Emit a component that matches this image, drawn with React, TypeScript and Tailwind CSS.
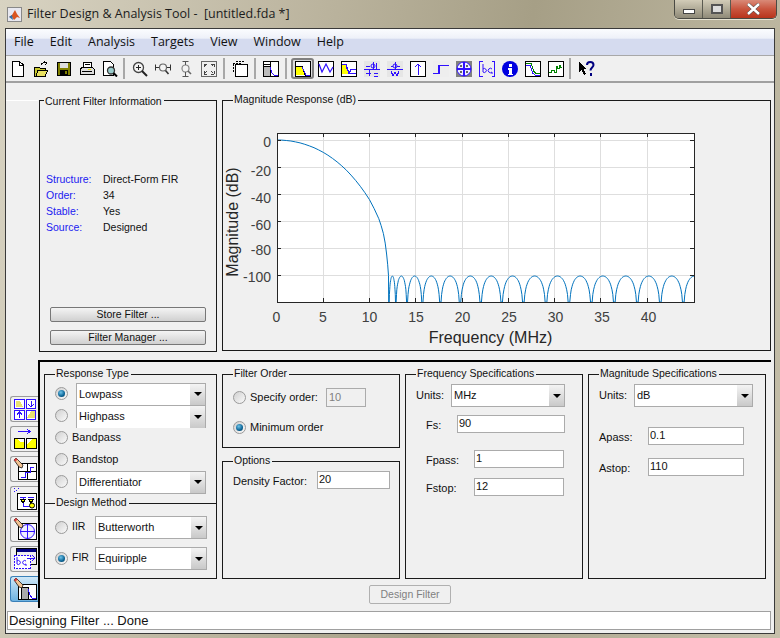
import type { ReactNode } from "react";

const BLUE = "#3010ff";

function Ico({ children, size = 16 }: { children: ReactNode; size?: number }) {
  return (
    <svg width={size} height={size} viewBox="0 0 16 16" fill="none" shapeRendering="crispEdges" className="block">
      {children}
    </svg>
  );
}

function Box({ children }: { children?: ReactNode }) {
  return (
    <Ico>
      <rect x="0.5" y="0.5" width="15" height="15" fill="#fff" stroke="#000" />
      {children}
    </Ico>
  );
}

const toolIcons: Record<string, ReactNode> = {
  newDoc: (
    <Ico>
      <path d="M2.500 .5h7L13.500 4v11.500h-11z" fill="#fff" stroke="#000" />
      <path d="M9.500 .5V4h4" stroke="#000" />
    </Ico>
  ),
  open: (
    <Ico>
      <path d="M1 6h5l1 1h5v8H1z" fill="#c8c830" stroke="#000" />
      <path d="M3 15l2-6h10l-3 6z" fill="#e8e060" stroke="#000" />
      <path d="M8 4C9 1.500 11 1 13 2M11 .5l3 1.500-2 2" stroke="#000" />
    </Ico>
  ),
  save: (
    <Ico>
      <rect x="1.500" y="1.500" width="13" height="13" fill="#808000" stroke="#000" />
      <rect x="4" y="2" width="8" height="5" fill="#ddd" />
      <rect x="4" y="9" width="8" height="5" fill="#000" />
      <rect x="9" y="10" width="2" height="3" fill="#808000" />
    </Ico>
  ),
  print: (
    <Ico>
      <path d="M4.500 1.500h8v5h-8z" fill="#fff" stroke="#000" />
      <path d="M1 8l3-2h9l2 2v5H1z" fill="#ddd" stroke="#000" />
      <path d="M3 13.500h10M3 10.500h10M6 3.500h5" stroke="#000" />
      <rect x="9" y="8" width="3" height="1" fill="#e8e000" />
    </Ico>
  ),
  preview: (
    <Ico>
      <path d="M1.500 .5h7l3 3v11h-10z" fill="#fff" stroke="#000" />
      <g shapeRendering="auto">
        <circle cx="9" cy="9.500" r="3.500" fill="#9cc" stroke="#333" strokeWidth="1.300" />
        <path d="M11.500 12l3.500 3.500" stroke="#000" strokeWidth="2" />
      </g>
    </Ico>
  ),
  zoomIn: (
    <Ico>
      <g shapeRendering="auto">
        <circle cx="6.500" cy="6.500" r="5" fill="#f4f4f4" stroke="#444" strokeWidth="1.300" />
        <path d="M10 10l5 5" stroke="#222" strokeWidth="2" />
        <path d="M4 6.500h5M6.500 4v5" stroke="#222" />
      </g>
    </Ico>
  ),
  zoomX: (
    <Ico>
      <g shapeRendering="auto">
        <circle cx="8" cy="6.500" r="3.500" fill="#f4f4f4" stroke="#666" strokeWidth="1.200" />
        <path d="M10.500 9.500l3 3.500" stroke="#333" strokeWidth="1.600" />
        <path d="M.5 3.500v6M15.500 3.500v6M1 6.500h3M12 6.500h3" stroke="#333" />
      </g>
    </Ico>
  ),
  zoomY: (
    <Ico>
      <g shapeRendering="auto">
        <circle cx="7.500" cy="7.500" r="3.500" fill="#f4f4f4" stroke="#888" strokeWidth="1.200" />
        <path d="M10 10l3 3" stroke="#666" strokeWidth="1.600" />
        <path d="M4.500 .5h6M4.500 15.500h6M7.500 1v3M7.500 11v4" stroke="#555" />
      </g>
    </Ico>
  ),
  full: (
    <Ico>
      <rect x=".5" y=".5" width="15" height="15" fill="#eee" stroke="#666" />
      <path d="M3 3h3M3 3v3M13 3h-3M13 3v3M3 13h3M3 13v-3M13 13h-3M13 13v-3" stroke="#444" />
      <path d="M3.500 3.500l2 2M12.500 3.500l-2 2M3.500 12.500l2-2M12.500 12.500l-2-2" stroke="#444" />
    </Ico>
  ),
  copy: (
    <Ico>
      <path d="M1 2.500h8M1 2.500v8M3.500 .5h8" stroke="#000" strokeDasharray="2 1" />
      <rect x="3.500" y="3.500" width="12" height="12" fill="#fff" stroke="#000" />
    </Ico>
  ),
  overlay: (
    <Box>
      <rect x="1" y="5" width="6" height="10" fill="#bbb" />
      <path d="M1 3.500h6M1 5.500h6M7.500 1v14" stroke="#000" />
      <path d="M7 6l2 6 2 2h4" stroke={BLUE} />
    </Box>
  ),
  mag: (
    <Box>
      <path d="M1 5h6l4 9H1z" fill="#ff0" />
      <path d="M1 5.500h6l3 8.500h5" stroke="#000" strokeWidth="1" />
      <path d="M7 6l4 8h4" stroke={BLUE} />
    </Box>
  ),
  phase: (
    <Box>
      <path d="M1 3l3 8 4-8 4 8 3-5" stroke={BLUE} shapeRendering="auto" strokeWidth="1.200" />
    </Box>
  ),
  both: (
    <Box>
      <path d="M1 3h4l3 10H1z" fill="#ff0" />
      <path d="M1 3.500h4l3 9h7M5 5l3 8 2-5h5" stroke={BLUE} />
    </Box>
  ),
  group: (
    <Ico>
      <rect width="16" height="16" fill="#e6e6e6" />
      <path d="M0 8.500h16M9 1v7M12 2v6M5 9v6M2 12h5M10 12h4M2 5h4M10 15h4" stroke={BLUE} />
      <circle cx="9" cy="5" r="2" stroke={BLUE} shapeRendering="auto" />
    </Ico>
  ),
  phaseDelay: (
    <Ico>
      <rect width="16" height="16" fill="#e6e6e6" />
      <path d="M0 8.500h16M8 1v7M4 5h2M10 5h3M4 10l2 5 2-4 2 4 2-5" stroke={BLUE} />
      <circle cx="8" cy="5" r="2" stroke={BLUE} shapeRendering="auto" />
    </Ico>
  ),
  impulse: (
    <Box>
      <path d="M8 14V3M5 6l3-3 3 3" stroke={BLUE} />
    </Box>
  ),
  step: (
    <Ico>
      <rect width="16" height="16" fill="#eee" />
      <path d="M0 12.500h6v-8h10" stroke={BLUE} strokeWidth="1.300" />
    </Ico>
  ),
  pz: (
    <Ico>
      <rect width="16" height="16" fill="#808080" />
      <circle cx="8" cy="8" r="7" fill="#eef" stroke={BLUE} shapeRendering="auto" />
      <path d="M1 8h14M8 1v14" stroke={BLUE} strokeWidth="1.300" />
      <path d="M4 4l2 2M6 4l-2 2M10 10l2 2M12 10l-2 2M4 10l2 2M6 10l-2 2M10 4l2 2M12 4l-2 2" stroke="#666" />
    </Ico>
  ),
  coef: (
    <Ico>
      <path d="M3.500 .5h-3v15h3M12.500 .5h3v15h-3" stroke={BLUE} />
      <g shapeRendering="auto">
        <path d="M4 3v8a2 2 0 1 0 0-3" stroke={BLUE} />
        <path d="M13 8a2.200 2.200 0 1 0 0 3v2" stroke={BLUE} />
      </g>
    </Ico>
  ),
  info: (
    <Ico>
      <g shapeRendering="auto">
        <circle cx="8" cy="8" r="8" fill="#0000e0" />
      </g>
      <rect x="7" y="3" width="2.500" height="2.500" fill="#fff" />
      <path d="M5.500 7h4v5.500h1.500V14H5.500v-1.500H7V8.500H5.500z" fill="#fff" />
    </Ico>
  ),
  round: (
    <Box>
      <path d="M1 2.500h5l3 8 2 2h4" stroke="#008000" />
      <path d="M1 4.500h4l3 8 2 1.500h5" stroke={BLUE} />
    </Box>
  ),
  noise: (
    <Box>
      <path d="M1 11.500h2v-2h3v2h2V5.500h1v2h2v-3h1v2h2" stroke="#008000" />
    </Box>
  ),
  help: (
    <Ico>
      <path d="M0 1l7.500 7H4.500l2.500 5-2 1-2.500-5L0 11.500z" fill="#000" />
      <path d="M8 4c0-4 6.500-4 6.500 0 0 2.500-3 2.500-3 5.500" stroke="#000080" strokeWidth="2" shapeRendering="auto" />
      <rect x="10.500" y="12" width="2.500" height="3" fill="#000080" />
    </Ico>
  ),
};

function Slot({ name, active }: { name: string; active?: boolean }) {
  return (
    <div className="w-[23px] h-[24px] flex items-center justify-center">
      <div
        className={
          active
            ? "w-[23px] h-[21px] flex items-center justify-center rounded-[3px] border-2 border-[#808080] bg-[#dcdcdc]"
            : "w-[16px] h-[16px]"
        }
      >
        {toolIcons[name]}
      </div>
    </div>
  );
}

function Sep({ className }: { className: string }) {
  return <div className={`w-[2px] h-[21px] bg-[#a8a8a8] ${className}`} />;
}

function Toolbar() {
  return (
    <div className="h-[27px] flex items-center bg-[#f0f0f0] border-b-2 border-[#a0a0a0]">
      {["newDoc", "open", "save", "print", "preview"].map((n) => (
        <Slot key={n} name={n} />
      ))}
      <Sep className="ml-[2px] mr-[3px]" />
      {["zoomIn", "zoomX", "zoomY", "full"].map((n) => (
        <Slot key={n} name={n} />
      ))}
      <Sep className="ml-[3px] mr-[3px]" />
      <Slot name="copy" />
      <Sep className="ml-[3px] mr-[3px]" />
      <Slot name="overlay" />
      <Sep className="ml-[3px] mr-[4px]" />
      <Slot name="mag" active />
      {["phase", "both", "group", "phaseDelay", "impulse", "step", "pz", "coef", "info", "round", "noise"].map((n) => (
        <Slot key={n} name={n} />
      ))}
      <Sep className="ml-[2px] mr-[4px]" />
      <Slot name="help" />
    </div>
  );
}

function Frame({
  title,
  className,
  legend = "-top-[9px] left-[10px]",
  children,
}: {
  title: string;
  className: string;
  legend?: string;
  children?: ReactNode;
}) {
  return (
    <div className={`relative border border-[#1a1a1a] ${className}`}>
      <span className={`absolute ${legend} bg-[#f0f0f0] px-[1px] pr-[2px] leading-[14px] text-[10.500px] whitespace-nowrap`}>
        {title}
      </span>
      {children}
    </div>
  );
}

function Radio({ on }: { on?: boolean }) {
  return (
    <div className="w-[13px] h-[13px] shrink-0 rounded-full border border-[#9a9a9a] bg-[linear-gradient(135deg,#d0d0d0,#fafafa)] flex items-center justify-center">
      {on && <div className="w-[7px] h-[7px] rounded-full bg-[radial-gradient(circle_at_40%_35%,#6fc3e8,#0b6496_60%,#04344f)]" />}
    </div>
  );
}

function Select({ value, className, noBottom }: { value: string; className: string; noBottom?: boolean }) {
  return (
    <div
      className={`h-[23px] bg-white border border-[#ababab] flex items-center justify-between pl-[2px] text-[11px] ${noBottom ? "border-b-0" : ""} ${className}`}
    >
      <span>{value}</span>
      <div className="w-[15px] h-full bg-[linear-gradient(#f4f4f4,#c9c9c9)] flex items-center justify-center">
        <div className="w-0 h-0 border-x-[4px] border-t-[4px] border-x-transparent border-t-black" />
      </div>
    </div>
  );
}

function Field({ value, className }: { value: string; className: string }) {
  return (
    <div className={`h-[18px] bg-white border border-[#ababab] pl-[1px] leading-[14px] text-[11px] ${className}`}>
      {value}
    </div>
  );
}

function PushButton({ label }: { label: string }) {
  return (
    <div className="h-[15px] border border-[#777] rounded-[2px] bg-[linear-gradient(#f4f4f4,#d0d0d0)] flex items-center justify-center leading-none">
      {label}
    </div>
  );
}

const info = [
  ["Structure:", "Direct-Form FIR"],
  ["Order:", "34"],
  ["Stable:", "Yes"],
  ["Source:", "Designed"],
];

function CurrentInfo() {
  return (
    <Frame title="Current Filter Information" legend="-top-[7px] left-[4px]" className="w-[178px] h-[252px] flex flex-col">
      <div className="pt-[71px] pl-[6px] flex flex-col">
        {info.map(([k, v]) => (
          <div key={k} className="h-[16px] flex items-center">
            <span className="w-[57px] text-[#2020f0]">{k}</span>
            <span>{v}</span>
          </div>
        ))}
      </div>
      <div className="mt-auto px-[10px] pb-[6px] flex flex-col gap-[8px]">
        <PushButton label="Store Filter ..." />
        <PushButton label="Filter Manager ..." />
      </div>
    </Frame>
  );
}

// plot mapping, all in window pixels
const px = (f: number) => 277 + 9.25 * f;
const py = (db: number) => 140 - 1.357 * db;

const rolloff: [number, number][] = [
  [10.5, -50.5], [11, -58], [11.25, -63], [11.5, -69], [11.7, -76], [11.85, -84], [11.97, -92], [12.05, -100], [12.08, -120],
];
const nulls = [389, 395.7, 407, 422.3, 440.3, 460, 480.7, 501.7, 523.3, 546, 569, 591.3, 614.3, 637.3, 660.3, 683.3, 706];

function curvePath() {
  let d = "M277 140";
  for (let f = 0.5; f <= 10; f += 0.5) {
    d += `L${px(f).toFixed(1)} ${py(-0.34 * f * f - 0.001 * f ** 4).toFixed(1)}`;
  }
  rolloff.forEach(([f, db]) => {
    d += `L${px(f).toFixed(1)} ${py(db).toFixed(1)}`;
  });
  nulls.slice(0, -1).forEach((a, i) => {
    const b = nulls[i + 1];
    for (let s = 0; s <= 30; s++) {
      const t = s / 30;
      const v = Math.sin(Math.PI * t);
      const y = v < 0.1 ? 302 : 276 - 27.14 * Math.log10(v);
      d += `L${(a + (b - a) * t).toFixed(1)} ${y.toFixed(1)}`;
    }
  });
  return d;
}

function Chart() {
  const xs = [0, 5, 10, 15, 20, 25, 30, 35, 40];
  const ys = [0, -20, -40, -60, -80, -100];
  const labelY = [147, 175.5, 202.5, 230, 255, 282];
  return (
    <svg viewBox="223 101 547 249" width="547" height="249" className="block" fontFamily="'Liberation Sans', sans-serif">
      <rect x="277" y="133" width="417" height="169" fill="#fff" />
      <g stroke="#dedede" shapeRendering="crispEdges">
        {xs.slice(1).map((f) => (
          <line key={f} x1={px(f)} x2={px(f)} y1="133" y2="302" />
        ))}
        {ys.map((v) => (
          <line key={v} x1="277" x2="694" y1={py(v)} y2={py(v)} />
        ))}
      </g>
      <clipPath id="plot">
        <rect x="277" y="133" width="417" height="169" />
      </clipPath>
      <path d={curvePath()} fill="none" stroke="#0072bd" strokeWidth="1" clipPath="url(#plot)" />
      <rect x="277.500" y="133.500" width="416.500" height="168.500" fill="none" stroke="#262626" shapeRendering="crispEdges" />
      <g stroke="#262626" shapeRendering="crispEdges">
        {xs.slice(1).map((f) => (
          <g key={f}>
            <line x1={px(f)} x2={px(f)} y1="298" y2="302" />
            <line x1={px(f)} x2={px(f)} y1="133" y2="137" />
          </g>
        ))}
        {ys.map((v) => (
          <g key={v}>
            <line x1="277" x2="281" y1={py(v)} y2={py(v)} />
            <line x1="690" x2="694" y1={py(v)} y2={py(v)} />
          </g>
        ))}
      </g>
      <g fill="#404040" fontSize="14">
        {xs.map((f) => (
          <text key={f} x={px(f) - 0.5 + f * 0.05} y="321.500" textAnchor="middle">
            {f}
          </text>
        ))}
        {ys.map((v, i) => (
          <text key={v} x="271" y={labelY[i]} textAnchor="end">
            {v}
          </text>
        ))}
      </g>
      <text x="490.500" y="343" textAnchor="middle" fontSize="16" fill="#262626">
        Frequency (MHz)
      </text>
      <text transform="translate(238 222) rotate(-90)" textAnchor="middle" fontSize="16" fill="#262626">
        Magnitude (dB)
      </text>
    </svg>
  );
}

function ResponseFrame() {
  return (
    <Frame title="Response Type" className="w-[173px] h-[205px] flex flex-col">
      <div className="h-[128px] pt-[7px] pl-[10px] flex flex-col">
        <div className="h-[22px] flex items-center">
          <Radio on />
          <Select value="Lowpass" className="ml-[8px] mt-[2px] w-[130px]" />
        </div>
        <div className="h-[22px] flex items-center">
          <Radio />
          <Select value="Highpass" className="ml-[8px] mt-[2px] w-[130px]" noBottom />
        </div>
        <div className="h-[22px] flex items-center gap-[4px] text-[11px]">
          <Radio />
          Bandpass
        </div>
        <div className="h-[22px] flex items-center gap-[4px] text-[11px]">
          <Radio />
          Bandstop
        </div>
        <div className="h-[22px] flex items-center">
          <Radio />
          <Select value="Differentiator" className="ml-[8px] mt-[2px] w-[130px]" />
        </div>
      </div>
      <Frame title="Design Method" className="grow border-x-0 border-b-0 pl-[10px] pt-[12px] flex flex-col gap-[8px]">
        <div className="h-[23px] flex items-center">
          <Radio />
          <span className="ml-[4px] w-[23px] -mt-[2px]">IIR</span>
          <Select value="Butterworth" className="w-[112px]" />
        </div>
        <div className="h-[23px] flex items-center">
          <Radio on />
          <span className="ml-[4px] w-[23px] -mt-[2px]">FIR</span>
          <Select value="Equiripple" className="w-[112px]" />
        </div>
      </Frame>
    </Frame>
  );
}

function MiddleColumn() {
  return (
    <div className="w-[178px] flex flex-col gap-[13px]">
      <Frame title="Filter Order" className="h-[74px] pl-[10px] pt-[12px] flex flex-col gap-[10px]">
        <div className="h-[20px] flex items-center gap-[4px] text-[11px]">
          <Radio />
          <span className="w-[72px]">Specify order:</span>
          <div className="w-[40px] h-[19px] border border-[#ababab] pl-[2px] leading-[16px] text-[#808080]">10</div>
        </div>
        <div className="h-[20px] flex items-center gap-[4px] text-[11px]">
          <Radio on />
          Minimum order
        </div>
      </Frame>
      <Frame title="Options" className="grow pl-[10px] pt-[9px]">
        <div className="flex items-center text-[11px]">
          <span className="w-[84px] mt-[2px]">Density Factor:</span>
          <Field value="20" className="w-[73px]" />
        </div>
      </Frame>
    </div>
  );
}

function FreqFrame() {
  return (
    <Frame title="Frequency Specifications" className="w-[178px] h-[205px] text-[11px]">
      <div className="flex items-center pl-[10px] pt-[9px]">
        <span className="w-[35px]">Units:</span>
        <Select value="MHz" className="w-[114px]" />
      </div>
      <div className="flex items-center pl-[20px] pt-[8px]">
        <span className="w-[31px] mt-[2px]">Fs:</span>
        <Field value="90" className="w-[108px]" />
      </div>
      <div className="flex items-center pl-[20px] pt-[16px]">
        <span className="w-[48px] mt-[2px]">Fpass:</span>
        <Field value="1" className="w-[90px]" />
      </div>
      <div className="flex items-center pl-[20px] pt-[10px]">
        <span className="w-[48px] mt-[2px]">Fstop:</span>
        <Field value="12" className="w-[90px]" />
      </div>
    </Frame>
  );
}

function MagFrame() {
  return (
    <Frame title="Magnitude Specifications" className="w-[178px] h-[205px] text-[11px]">
      <div className="flex items-center pl-[10px] pt-[9px]">
        <span className="w-[35px]">Units:</span>
        <Select value="dB" className="w-[119px]" />
      </div>
      <div className="flex items-center pl-[10px] pt-[20px]">
        <span className="w-[49px] mt-[2px]">Apass:</span>
        <Field value="0.1" className="w-[96px]" />
      </div>
      <div className="flex items-center pl-[10px] pt-[12px]">
        <span className="w-[49px] mt-[2px]">Astop:</span>
        <Field value="110" className="w-[96px]" />
      </div>
    </Frame>
  );
}

const Pencil = () => (
  <g shapeRendering="auto">
    <path d="M1 3l2-2 7 7-1 3-3-1z" fill="#f0c090" stroke="#000" strokeWidth=".7" />
    <path d="M1 3l2-2 1.500 1.500-2 2z" fill="#e04040" />
  </g>
);

const sideIcons: ReactNode[] = [
  <svg key="0" width="24" height="22" viewBox="0 0 24 22" fill="none" shapeRendering="crispEdges">
    <rect x="1.500" y="1.500" width="10" height="9" fill="#fff" stroke={BLUE} />
    <rect x="13.500" y="1.500" width="9" height="9" fill="#fff" stroke={BLUE} />
    <rect x="1.500" y="12.500" width="10" height="9" fill="#fff" stroke={BLUE} />
    <rect x="13.500" y="12.500" width="9" height="9" fill="#fff" stroke={BLUE} />
    <path d="M3 3h4l3 6H3zM14 20l4-7h4v7z" fill="#e8e070" />
    <path d="M18 3v6M15.500 6.500L18 9l2.500-2.500M6.500 20v-6M4 16.500L6.500 14 9 16.500" stroke={BLUE} />
  </svg>,
  <svg key="1" width="24" height="22" viewBox="0 0 24 22" fill="none" shapeRendering="crispEdges">
    <path d="M5 3.500h12M14 1l3 2.500L14 6" stroke={BLUE} />
    <rect x="1.500" y="10.500" width="10" height="10" fill="#ff0" stroke="#000" />
    <rect x="13.500" y="10.500" width="10" height="10" fill="#ff0" stroke="#000" />
    <path d="M2 11h3l2 3h4v-3zM14 11v5l4-4 2-1z" fill="#fff" />
  </svg>,
  <svg key="2" width="24" height="24" viewBox="0 0 24 24" fill="none" shapeRendering="crispEdges">
    <rect x="5.500" y="6.500" width="18" height="16" fill="#fff" stroke="#000" />
    <path d="M14.500 7v15M6 14.500h17" stroke="#000" />
    <path d="M8 20h4v-5h5v-5h4" stroke={BLUE} />
    <Pencil />
  </svg>,
  <svg key="3" width="24" height="24" viewBox="0 0 24 24" fill="none" shapeRendering="crispEdges">
    <path d="M1 1h1M3 3h1M1 4h1M5 1h1" stroke={BLUE} />
    <rect x="4.500" y="6.500" width="19" height="16" fill="#fff" stroke="#000" />
    <path d="M7 10.500h6M15 10.500h6M10 11v8h8" stroke={BLUE} />
    <path d="M7 12h6l-3 4zM15 12h6l-3 4z" fill="#ff0" stroke="#000" />
    <circle cx="19" cy="18.500" r="2.500" fill="#ff0" stroke="#000" shapeRendering="auto" />
  </svg>,
  <svg key="4" width="24" height="24" viewBox="0 0 24 24" fill="none" shapeRendering="crispEdges">
    <rect x="5.500" y="6.500" width="18" height="16" fill="#fff" stroke="#000" />
    <circle cx="14.500" cy="14.500" r="7" fill="#eef" stroke={BLUE} shapeRendering="auto" />
    <path d="M7 14.500h15M14.500 7v15" stroke={BLUE} />
    <Pencil />
  </svg>,
  <svg key="5" width="24" height="24" viewBox="0 0 24 24" fill="none" shapeRendering="crispEdges">
    <rect x="3.500" y="1.500" width="20" height="16" fill="#eee" stroke="#000" />
    <rect x="4" y="2" width="19" height="3" fill="#000080" />
    <rect x="1.500" y="8.500" width="16" height="13" fill="#fff" stroke={BLUE} strokeDasharray="2 1" />
    <path d="M14 11h8M19 8l3 3-3 3" stroke={BLUE} />
    <path d="M4 10v7a2 2 0 1 0 0-3M13 14a2 2 0 1 0 0 3v2" stroke={BLUE} shapeRendering="auto" />
  </svg>,
  <svg key="6" width="24" height="24" viewBox="0 0 24 24" fill="none" shapeRendering="crispEdges">
    <rect x="5.500" y="7.500" width="18" height="15" fill="#fff" stroke="#000" />
    <rect x="8" y="10" width="7" height="12" fill="#aaa" stroke="#000" />
    <path d="M15 12l2 6 2 3h4" stroke={BLUE} />
    <Pencil />
  </svg>,
];

function Sidebar() {
  return (
    <div className="w-[32px] shrink-0 flex flex-col">
      <div className="h-[17px]" />
      <div className="w-[32px] border-t border-white" />
      <div className="mt-auto pl-[4px] pb-[6px] flex flex-col gap-[4px] items-start">
        {sideIcons.map((icon, i) => (
          <div
            key={i}
            className={`w-[28px] h-[26px] rounded-l-[3px] border border-r-0 overflow-hidden flex items-center justify-center ${
              i === 6 ? "border-[#3a80b8] bg-[linear-gradient(#cfe8f8,#6db2e0)]" : "border-[#9a9a9a] bg-[#f0f0f0]"
            }`}
          >
            {icon}
          </div>
        ))}
      </div>
    </div>
  );
}

function TitleBar() {
  return (
    <div className="h-[28px] flex items-start justify-between pl-[7px] pr-[3px]">
      <div className="flex items-center gap-[5px] pt-[5px]">
        <svg width="15" height="15" viewBox="0 0 15 15" className="block">
          <rect x=".5" y=".5" width="14" height="14" fill="#e8e8f0" stroke="#888" />
          <path d="M2 10l3-2 3-5 2 4 3 4-3-1-3 3-2-3z" fill="#d9541e" />
          <path d="M2 10l3-2 1 5z" fill="#2f6fa8" />
        </svg>
        <span className="font-['Open_Sans',sans-serif] text-[12.500px] leading-[18px] text-[#1c1c1c] whitespace-pre">
          {"Filter Design & Analysis Tool -  [untitled.fda *]"}
        </span>
      </div>
      <div className="flex h-[19px] w-[103px] rounded-b-[5px] overflow-hidden border border-t-0 border-[#4a4a44] shadow-[0_1px_0_#e8e4d4]">
        <div className="w-[28px] border-r border-[#5a5a50] bg-[linear-gradient(#d2ccb8,#8f8a78)] flex items-center justify-center">
          <div className="w-[12px] h-[5px] mt-[5px] bg-white border border-[#444]" />
        </div>
        <div className="w-[28px] border-r border-[#5a5a50] bg-[linear-gradient(#d2ccb8,#8f8a78)] flex items-center justify-center">
          <div className="w-[12px] h-[10px] bg-[#ddd] border-2 border-[#555]" />
        </div>
        <div className="grow bg-[linear-gradient(#d98a78_0%,#c9553e_50%,#b8341c_100%)] flex items-center justify-center">
          <svg width="15" height="12" viewBox="0 0 15 12" className="block">
            <path d="M2 1l11 10M13 1L2 11" stroke="#444" strokeWidth="3.500" />
            <path d="M2 1l11 10M13 1L2 11" stroke="#fff" strokeWidth="2.500" />
          </svg>
        </div>
      </div>
    </div>
  );
}

const menus = ["File", "Edit", "Analysis", "Targets", "View", "Window", "Help"];

export default function App() {
  return (
    <div className="w-[780px] h-[638px] overflow-hidden flex flex-col bg-[linear-gradient(100deg,#d8d3c2_0%,#c0b9a4_30%,#a69f86_60%,#c6c0ab_100%)] font-['Liberation_Sans',sans-serif] text-[10.500px] text-[#111]">
      <TitleBar />
      <div className="mx-[5px] h-[606px] border border-[#3a3a3a] bg-[#f0f0f0] flex flex-col">
        <div className="h-[27px] flex items-center gap-[16px] pl-[8px] bg-[linear-gradient(#fbfcfe_0%,#eef1f9_35%,#d5dbef_40%,#d5dbef_100%)] border-b border-[#a8a8a8] font-['Open_Sans',sans-serif] text-[12.500px]">
          {menus.map((m) => (
            <span key={m}>{m}</span>
          ))}
        </div>
        <Toolbar />
        <div className="flex h-[525px]">
          <Sidebar />
          <div className="grow flex flex-col">
            <div className="h-[277px] pt-[17px] pl-[1px] flex gap-[5px]">
              <CurrentInfo />
              <Frame title="Magnitude Response (dB)" className="w-[549px] h-[251px]">
                <Chart />
              </Frame>
            </div>
            <div className="h-[248px] w-[733px] border-t-2 border-l-2 border-black pl-[4px] pt-[12px]">
              <div className="flex gap-[5px]">
                <ResponseFrame />
                <MiddleColumn />
                <FreqFrame />
                <MagFrame />
              </div>
              <div className="mt-[6px] ml-[325px] w-[82px] h-[19px] rounded-[2px] border border-[#b0b0b0] bg-[#f0f0f0] flex items-center justify-center text-[#808080]">
                Design Filter
              </div>
            </div>
          </div>
        </div>
        <div className="mx-[1px] mt-[3px] w-[764px] h-[19px] bg-white border border-[#a0a0a0] pl-[1px] text-[13px] leading-[17px]">
          Designing Filter ... Done
        </div>
      </div>
    </div>
  );
}
